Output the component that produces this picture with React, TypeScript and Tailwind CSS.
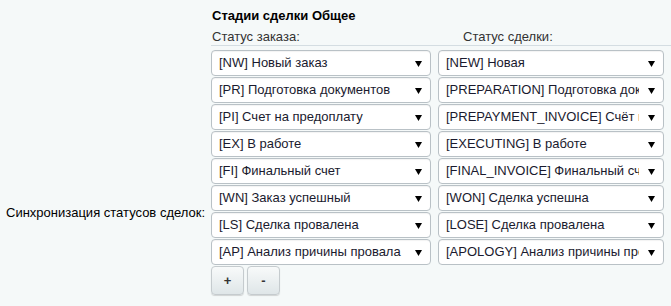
const rows: [string, string][] = [
  ['[NW] Новый заказ', '[NEW] Новая'],
  ['[PR] Подготовка документов', '[PREPARATION] Подготовка документов'],
  ['[PI] Счет на предоплату', '[PREPAYMENT_INVOICE] Счёт на предоплату'],
  ['[EX] В работе', '[EXECUTING] В работе'],
  ['[FI] Финальный счет', '[FINAL_INVOICE] Финальный счёт'],
  ['[WN] Заказ успешный', '[WON] Сделка успешна'],
  ['[LS] Сделка провалена', '[LOSE] Сделка провалена'],
  ['[AP] Анализ причины провала', '[APOLOGY] Анализ причины провала'],
]

function Select({ value, width }: { value: string; width: string }) {
  return (
    <div
      className={`relative h-[26px] ${width} rounded-[4px] border border-[#b9c1c6] bg-white shadow-[inset_0_1px_1px_rgba(0,0,0,0.05)]`}
    >
      <div className="ml-[7px] mr-[24px] overflow-hidden whitespace-nowrap text-[13px] leading-[24px] text-[#1a1a2e]">
        {value}
      </div>
      <svg className="absolute right-[8px] top-[10px]" width="7" height="6" viewBox="0 0 7 6">
        <path d="M0 0h7L3.5 6z" fill="#000" />
      </svg>
    </div>
  )
}

export default function App() {
  return (
    <div className="min-h-[306px] w-[671px] bg-[#f5f9f9] font-['Liberation_Sans',Arial,sans-serif] text-[#000]">
      <div className="flex">
        <div className="w-[211px] shrink-0 pt-[203px] pl-[6px] text-[13px] leading-[19px]">
          Синхронизация статусов сделок:
        </div>
        <div className="flex-1">
          <div className="pt-[8px] pl-[1px] text-[13px] font-bold leading-[16px]">Стадии сделки Общее</div>
          <div className="flex border-b border-[#d4dde2] pt-[5px] text-[13px] leading-[16px] text-[#333]">
            <div className="w-[252px] pl-[1px]">Статус заказа:</div>
            <div>Статус сделки:</div>
          </div>
          <div className="flex flex-col gap-[1px] pt-[4px]">
            {rows.map(([a, b]) => (
              <div key={a} className="flex gap-[7px]">
                <Select value={a} width="w-[220px]" />
                <Select value={b} width="w-[226px]" />
              </div>
            ))}
          </div>
          <div className="flex gap-[3px] pt-[1px]">
            {['+', '-'].map((s) => (
              <button
                key={s}
                className="h-[29px] w-[33px] rounded-[4px] border border-[#c5cbce] bg-gradient-to-b from-[#f8fafa] to-[#dfe6e8] text-[13px] font-bold text-[#333] shadow-[0_1px_1px_rgba(0,0,0,0.15)]"
              >
                {s}
              </button>
            ))}
          </div>
        </div>
      </div>
    </div>
  )
}
